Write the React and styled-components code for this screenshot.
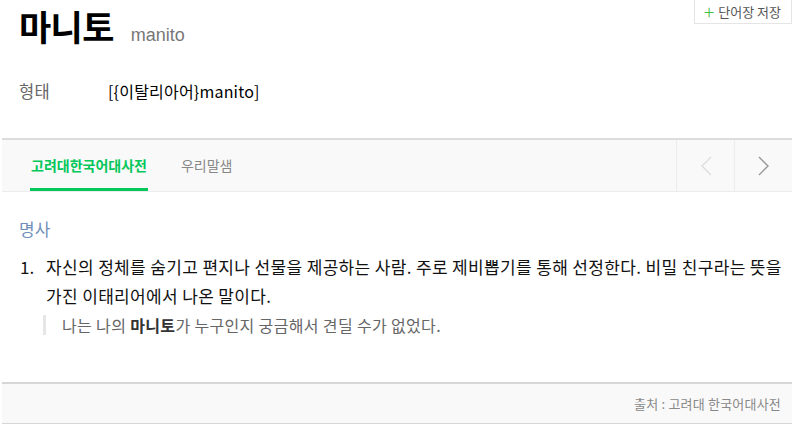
import React from "react";
import styled, { createGlobalStyle } from "styled-components";

const Global = createGlobalStyle`
  html, body { margin: 0; padding: 0; background: #fff; }
  body { font-family: "Noto Sans CJK KR", "Noto Sans", sans-serif; color: #000; }
`;

const Page = styled.div`
  width: 790px;
  margin-left: 2px;
`;

const Header = styled.div`
  display: flex;
  justify-content: space-between;
  align-items: flex-start;
  padding-left: 17px;
  height: 68px;
`;

const TitleRow = styled.div`
  display: flex;
  align-items: baseline;
  gap: 17px;
  padding-top: 4px;
`;

const Title = styled.h1`
  margin: 0;
  font-size: 35px;
  font-weight: 700;
  line-height: 44px;
  letter-spacing: -0.6px;
`;

const Roman = styled.span`
  font-family: "Liberation Sans", Arial, sans-serif;
  font-size: 18px;
  color: #777;
`;

const SaveButton = styled.button`
  display: flex;
  align-items: center;
  gap: 4px;
  height: 24px;
  padding: 0 10px 0 9px;
  border: 1px solid #e5e5e5;
  border-top: none;
  background: #fff;
  font-family: inherit;
  font-size: 13px;
  color: #555;
`;

const Plus = styled.span`
  color: #3cbf3c;
  font-size: 19px;
  font-weight: 300;
  line-height: 1;
  margin-top: -2px;
`;

const FormRow = styled.div`
  display: flex;
  align-items: center;
  padding-left: 17px;
  height: 46px;
  padding-bottom: 2px;
  font-size: 16px;
  letter-spacing: 0.2px;
`;

const Label = styled.span`
  width: 89px;
  color: #666;
  font-size: 16.5px;
`;

const TabBar = styled.div`
  margin-top: 22px;
  display: flex;
  justify-content: space-between;
  height: 51px;
  background: #f9f9f9;
  border-top: 2px solid #dcdcdc;
  border-bottom: 1px solid #ececec;
`;

const Tabs = styled.div`
  display: flex;
  padding-left: 28px;
  gap: 32px;
`;

const Tab = styled.div`
  display: flex;
  align-items: center;
  padding: 2px 1px 0;
  font-size: 14px;
  font-weight: ${(p) => (p.$active ? 700 : 400)};
  color: ${(p) => (p.$active ? "#03c75a" : "#888")};
  border-bottom: 3px solid ${(p) => (p.$active ? "#03c75a" : "transparent")};
`;

const Nav = styled.div`
  display: flex;
`;

const NavButton = styled.div`
  width: 57px;
  display: flex;
  align-items: center;
  justify-content: center;
  border-left: 1px solid #ececec;
  color: ${(p) => (p.$disabled ? "#ddd" : "#999")};
`;

const Body = styled.div`
  box-sizing: border-box;
  padding: 24px 0 0 17px;
  height: 190px;
`;

const Pos = styled.div`
  color: #6f8fba;
  font-size: 17px;
  line-height: 26px;
`;

const Sense = styled.div`
  display: flex;
  margin-top: 10px;
  font-size: 17px;
  letter-spacing: 0.35px;
  line-height: 29px;
  color: #111;
  word-break: keep-all;
`;

const Num = styled.span`
  width: 26px;
  flex: none;
  padding-left: 1px;
  letter-spacing: 0;
`;

const SenseText = styled.div`
  flex: 1;
`;

const Example = styled.div`
  margin-top: 5px;
  border-left: 3px solid #e6e6e6;
  padding-left: 16px;
  margin-left: -3px;
  line-height: 20px;
  font-size: 16px;
  letter-spacing: 0.35px;
  color: #666;
  & b { color: #333; font-weight: 700; }
`;

const Footer = styled.div`
  height: 39px;
  display: flex;
  align-items: center;
  justify-content: flex-end;
  padding-right: 11px;
  background: #f9f9f9;
  border-top: 2px solid #d6d6d6;
  border-bottom: 1px solid #d6d6d6;
  font-size: 13px;
  letter-spacing: 0.2px;
  color: #888;
`;

const Chevron = ({ dir }) => (
  <svg width="12" height="20" viewBox="0 0 12 20" fill="none" stroke="currentColor" strokeWidth="1.4">
    {dir === "left" ? <path d="M11 1 L2 10 L11 19" /> : <path d="M1 1 L10 10 L1 19" />}
  </svg>
);

export default function App() {
  return (
    <Page>
      <Global />
      <Header>
        <TitleRow>
          <Title>마니토</Title>
          <Roman>manito</Roman>
        </TitleRow>
        <SaveButton>
          <Plus>+</Plus>단어장 저장
        </SaveButton>
      </Header>
      <FormRow>
        <Label>형태</Label>
        <span>[{"{"}이탈리아어{"}"}manito]</span>
      </FormRow>
      <TabBar>
        <Tabs>
          <Tab $active>고려대한국어대사전</Tab>
          <Tab>우리말샘</Tab>
        </Tabs>
        <Nav>
          <NavButton $disabled>
            <Chevron dir="left" />
          </NavButton>
          <NavButton>
            <Chevron dir="right" />
          </NavButton>
        </Nav>
      </TabBar>
      <Body>
        <Pos>명사</Pos>
        <Sense>
          <Num>1.</Num>
          <SenseText>
            자신의 정체를 숨기고 편지나 선물을 제공하는 사람. 주로 제비뽑기를 통해 선정한다. 비밀 친구라는 뜻을 가진 이태리어에서 나온 말이다.
            <Example>
              나는 나의 <b>마니토</b>가 누구인지 궁금해서 견딜 수가 없었다.
            </Example>
          </SenseText>
        </Sense>
      </Body>
      <Footer>출처 : 고려대 한국어대사전</Footer>
    </Page>
  );
}
